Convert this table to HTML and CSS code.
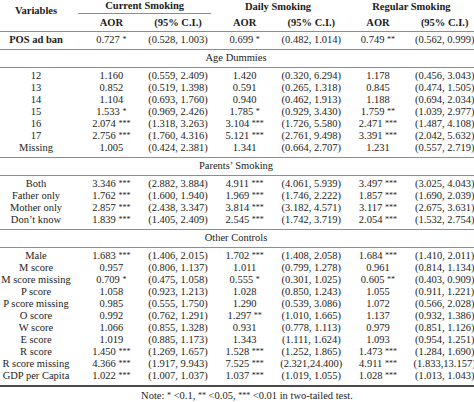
FILE: index.html
```html
<!DOCTYPE html>
<html>
<head>
<meta charset="utf-8">
<link rel="stylesheet" href="styles.css">
</head>
<body>
<table class="tbl">
  <colgroup>
    <col class="c-var"><col class="c-num"><col class="c-num"><col class="c-num"><col class="c-num"><col class="c-num"><col class="c-num">
  </colgroup>
  <thead>
    <tr class="h1">
      <th class="var" rowspan="2">Variables</th>
      <th class="grp rule" colspan="2">Current Smoking</th>
      <th class="grp" colspan="2">Daily Smoking</th>
      <th class="grp" colspan="2">Regular Smoking</th>
    </tr>
    <tr class="h2">
      <th>AOR</th><th>(95% C.I.)</th>
      <th>AOR</th><th>(95% C.I.)</th>
      <th>AOR</th><th>(95% C.I.)</th>
    </tr>
  </thead>
  <tbody>
    <tr class="first last">
      <td class="lbl bold">POS ad ban</td>
      <td>0.727 <span class="st">*</span></td><td>(0.528, 1.003)</td>
      <td>0.699 <span class="st">*</span></td><td>(0.482, 1.014)</td>
      <td>0.749 <span class="st">**</span></td><td>(0.562, 0.999)</td>
    </tr>
    <tr class="sec"><td colspan="7">Age Dummies</td></tr>
    <tr class="first">
      <td class="lbl">12</td><td>1.160</td><td>(0.559, 2.409)</td><td>1.420</td><td>(0.320, 6.294)</td><td>1.178</td><td>(0.456, 3.043)</td>
    </tr>
    <tr>
      <td class="lbl">13</td><td>0.852</td><td>(0.519, 1.398)</td><td>0.591</td><td>(0.265, 1.318)</td><td>0.845</td><td>(0.474, 1.505)</td>
    </tr>
    <tr>
      <td class="lbl">14</td><td>1.104</td><td>(0.693, 1.760)</td><td>0.940</td><td>(0.462, 1.913)</td><td>1.188</td><td>(0.694, 2.034)</td>
    </tr>
    <tr>
      <td class="lbl">15</td><td>1.533 <span class="st">*</span></td><td>(0.969, 2.426)</td><td>1.785 <span class="st">*</span></td><td>(0.929, 3.430)</td><td>1.759 <span class="st">**</span></td><td>(1.039, 2.977)</td>
    </tr>
    <tr>
      <td class="lbl">16</td><td>2.074 <span class="st">***</span></td><td>(1.318, 3.263)</td><td>3.104 <span class="st">***</span></td><td>(1.726, 5.580)</td><td>2.471 <span class="st">***</span></td><td>(1.487, 4.108)</td>
    </tr>
    <tr>
      <td class="lbl">17</td><td>2.756 <span class="st">***</span></td><td>(1.760, 4.316)</td><td>5.121 <span class="st">***</span></td><td>(2.761, 9.498)</td><td>3.391 <span class="st">***</span></td><td>(2.042, 5.632)</td>
    </tr>
    <tr class="last">
      <td class="lbl">Missing</td><td>1.005</td><td>(0.424, 2.381)</td><td>1.341</td><td>(0.664, 2.707)</td><td>1.231</td><td>(0.557, 2.719)</td>
    </tr>
    <tr class="sec"><td colspan="7">Parents’ Smoking</td></tr>
    <tr class="first">
      <td class="lbl">Both</td><td>3.346 <span class="st">***</span></td><td>(2.882, 3.884)</td><td>4.911 <span class="st">***</span></td><td>(4.061, 5.939)</td><td>3.497 <span class="st">***</span></td><td>(3.025, 4.043)</td>
    </tr>
    <tr>
      <td class="lbl">Father only</td><td>1.762 <span class="st">***</span></td><td>(1.600, 1.940)</td><td>1.969 <span class="st">***</span></td><td>(1.746, 2.222)</td><td>1.857 <span class="st">***</span></td><td>(1.690, 2.039)</td>
    </tr>
    <tr>
      <td class="lbl">Mother only</td><td>2.857 <span class="st">***</span></td><td>(2.438, 3.347)</td><td>3.814 <span class="st">***</span></td><td>(3.182, 4.571)</td><td>3.117 <span class="st">***</span></td><td>(2.675, 3.631)</td>
    </tr>
    <tr class="last">
      <td class="lbl">Don’t know</td><td>1.839 <span class="st">***</span></td><td>(1.405, 2.409)</td><td>2.545 <span class="st">***</span></td><td>(1.742, 3.719)</td><td>2.054 <span class="st">***</span></td><td>(1.532, 2.754)</td>
    </tr>
    <tr class="sec"><td colspan="7">Other Controls</td></tr>
    <tr class="first">
      <td class="lbl">Male</td><td>1.683 <span class="st">***</span></td><td>(1.406, 2.015)</td><td>1.702 <span class="st">***</span></td><td>(1.408, 2.058)</td><td>1.684 <span class="st">***</span></td><td>(1.410, 2.011)</td>
    </tr>
    <tr>
      <td class="lbl">M score</td><td>0.957</td><td>(0.806, 1.137)</td><td>1.011</td><td>(0.799, 1.278)</td><td>0.961</td><td>(0.814, 1.134)</td>
    </tr>
    <tr>
      <td class="lbl">M score missing</td><td>0.709 <span class="st">*</span></td><td>(0.475, 1.058)</td><td>0.555 <span class="st">*</span></td><td>(0.301, 1.025)</td><td>0.605 <span class="st">**</span></td><td>(0.403, 0.909)</td>
    </tr>
    <tr>
      <td class="lbl">P score</td><td>1.058</td><td>(0.923, 1.213)</td><td>1.028</td><td>(0.850, 1.243)</td><td>1.055</td><td>(0.911, 1.221)</td>
    </tr>
    <tr>
      <td class="lbl">P score missing</td><td>0.985</td><td>(0.555, 1.750)</td><td>1.290</td><td>(0.539, 3.086)</td><td>1.072</td><td>(0.566, 2.028)</td>
    </tr>
    <tr>
      <td class="lbl">O score</td><td>0.992</td><td>(0.762, 1.291)</td><td>1.297 <span class="st">**</span></td><td>(1.010, 1.665)</td><td>1.137</td><td>(0.932, 1.386)</td>
    </tr>
    <tr>
      <td class="lbl">W score</td><td>1.066</td><td>(0.855, 1.328)</td><td>0.931</td><td>(0.778, 1.113)</td><td>0.979</td><td>(0.851, 1.126)</td>
    </tr>
    <tr>
      <td class="lbl">E score</td><td>1.019</td><td>(0.885, 1.173)</td><td>1.343</td><td>(1.111, 1.624)</td><td>1.093</td><td>(0.954, 1.251)</td>
    </tr>
    <tr>
      <td class="lbl">R score</td><td>1.450 <span class="st">***</span></td><td>(1.269, 1.657)</td><td>1.528 <span class="st">***</span></td><td>(1.252, 1.865)</td><td>1.473 <span class="st">***</span></td><td>(1.284, 1.690)</td>
    </tr>
    <tr>
      <td class="lbl">R score missing</td><td>4.366 <span class="st">***</span></td><td>(1.917, 9.943)</td><td>7.525 <span class="st">***</span></td><td>(2.321,24.400)</td><td>4.911 <span class="st">***</span></td><td>(1.833,13.157)</td>
    </tr>
    <tr class="last end">
      <td class="lbl">GDP per Capita</td><td>1.022 <span class="st">***</span></td><td>(1.007, 1.037)</td><td>1.037 <span class="st">***</span></td><td>(1.019, 1.055)</td><td>1.028 <span class="st">***</span></td><td>(1.013, 1.043)</td>
    </tr>
    <tr class="note"><td colspan="7">Note: <span class="st">*</span> &lt;0.1, <span class="st">**</span> &lt;0.05, <span class="st">***</span> &lt;0.01 in two-tailed test.</td></tr>
  </tbody>
</table>
</body>
</html>
```

FILE: styles.css
```css
html, body {
  margin: 0;
  padding: 0;
  background: #ffffff;
  overflow: hidden;
}

body {
  font-family: "Liberation Serif", "Times New Roman", serif;
  font-size: 10.5px;
  color: #1c1c1c;
}

.tbl {
  table-layout: fixed;
  border-collapse: separate;
  border-spacing: 0;
  width: 484px;
  margin-left: -6px;
}

.c-var { width: 84px; }
.c-num { width: 66.66px; }

.tbl th,
.tbl td {
  padding: 0;
  line-height: 12px;
  text-align: center;
  white-space: nowrap;
  font-weight: normal;
}

.tbl th {
  font-weight: bold;
}

.tbl td.bold {
  font-weight: bold;
}

.h1 th {
  line-height: 11px;
  padding-bottom: 2px;
}

.h1 th.var {
  vertical-align: top;
  padding-top: 5px;
  line-height: 12px;
  border-bottom: 1px solid #8e8e8e;
}

.h1 th.rule {
  border-bottom: 1px solid #8e8e8e;
}

.h2 th {
  padding-top: 3px;
  padding-bottom: 2px;
  border-bottom: 1px solid #8e8e8e;
}

.first td { padding-top: 2px; }
.last td {
  padding-bottom: 3px;
  border-bottom: 1px solid #8e8e8e;
}
.end td {
  border-bottom: 2px solid #4a4a4a;
}

.sec td {
  padding-top: 2px;
  padding-bottom: 3px;
  border-bottom: 1px solid #8e8e8e;
}

.st {
  font-size: 8px;
  vertical-align: 1px;
}

.note td {
  padding-top: 3px;
  padding-left: 22px;
}
```
